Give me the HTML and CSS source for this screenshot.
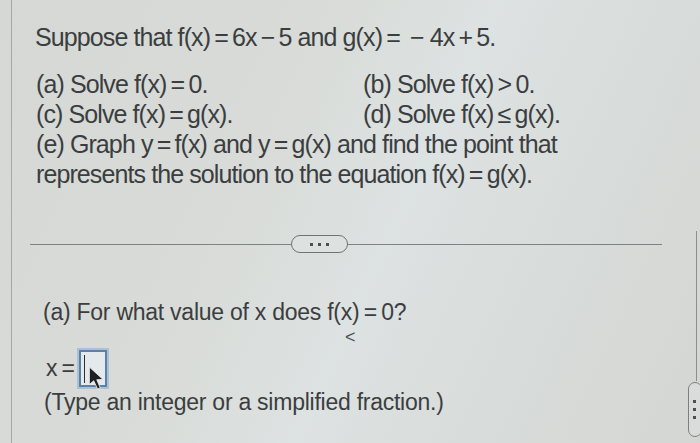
FILE: index.html
```html
<!DOCTYPE html>
<html>
<head>
<meta charset="utf-8">
<link rel="stylesheet" href="styles.css">
</head>
<body>
<div class="screen">
  <div class="frame">
    <div class="problem">
      <p class="title">Suppose that f(x)&#8201;=&#8201;6x&#8201;&minus;&#8201;5 and g(x)&#8201;=&#8201; &minus; 4x&#8201;+&#8201;5.</p>
      <div class="parts">
        <span>(a) Solve f(x)&#8201;=&#8201;0.</span>
        <span>(b) Solve f(x)&#8201;&gt;&#8201;0.</span>
        <span>(c) Solve f(x)&#8201;=&#8201;g(x).</span>
        <span>(d) Solve f(x)&#8201;&le;&#8201;g(x).</span>
        <span class="wide">(e) Graph y&#8201;=&#8201;f(x) and y&#8201;=&#8201;g(x) and find the point that</span>
        <span class="wide">represents the solution to the equation f(x)&#8201;=&#8201;g(x).</span>
      </div>
    </div>
    <div class="divider">
      <span class="rule rule-left"></span>
      <button class="more"><i></i><i></i><i></i></button>
      <span class="rule"></span>
    </div>
    <div class="answer">
      <p class="question">(a) For what value of x does f(x)&#8201;=&#8201;0?</p>
      <span class="scribble">&lt;</span>
      <div class="entry">
        <span class="var">x&#8201;=</span>
        <span class="box">
          <span class="caret"></span>
          <svg class="pointer" width="18" height="24" viewBox="0 0 16 22"><path d="M1 1 L1 17 L5 13.5 L8.5 21 L11 20 L7.8 12.6 L13.5 12.3 Z" fill="#1e2022" stroke="#e8ecee" stroke-width="0.8"/></svg>
        </span>
      </div>
      <p class="hint">(Type an integer or a simplified fraction.)</p>
    </div>
  </div>
  <div class="side-handle"><i></i><i></i><i></i></div>
</div>
</body>
</html>
```
FILE: styles.css
```css
html, body {
  margin: 0;
  padding: 0;
}
body {
  width: 700px;
  height: 443px;
  overflow: hidden;
  font-family: "Liberation Sans", Arial, sans-serif;
  color: #3b3e40;
  background: linear-gradient(115deg, #d5d8d4 0%, #d8dbd7 35%, #dde2e2 55%, #d8dcda 75%, #d4d6d3 100%);
}
.screen {
  position: relative;
  width: 700px;
  height: 443px;
}
.frame {
  margin-left: 11px;
  height: 443px;
  border-left: 1px solid #a3a9a8;
  box-sizing: border-box;
}
.problem {
  padding-top: 22px;
  padding-left: 23px;
  font-size: 25px;
  line-height: 30px;
  letter-spacing: -0.9px;
}
.title {
  margin: 0 0 17px 0;
}
.parts {
  display: grid;
  grid-template-columns: 327px auto;
  padding-left: 1px;
}
.parts .wide {
  grid-column: 1 / 3;
}
.divider {
  display: flex;
  align-items: center;
  margin-top: 46px;
  margin-left: 18px;
  width: 632px;
  height: 18px;
}
.rule {
  flex: 1;
  height: 1px;
  background: #7d8382;
}
.rule-left {
  flex: 0 0 261px;
}
.more {
  width: 57px;
  height: 18px;
  box-sizing: border-box;
  border: 1.5px solid #6f7575;
  border-radius: 9px;
  background: #dde1e0;
  display: flex;
  align-items: center;
  justify-content: center;
  gap: 5px;
  padding: 0;
}
.more i {
  width: 3px;
  height: 3px;
  background: #4a4f50;
}
.answer {
  position: relative;
  padding-left: 31px;
  margin-top: 45px;
  font-size: 23px;
  line-height: 28px;
  letter-spacing: -0.25px;
}
.question {
  margin: 0;
}
.scribble {
  position: absolute;
  left: 333px;
  top: 30px;
  font-size: 18px;
  line-height: 18px;
  color: #4b5052;
}
.entry {
  display: flex;
  align-items: center;
  gap: 4px;
  margin-top: 24px;
  height: 37px;
  padding-left: 3px;
}
.var {
  line-height: 37px;
}
.box {
  position: relative;
  width: 28px;
  height: 37px;
  box-sizing: border-box;
  border: 2px solid #5a80ac;
  background: #e4e9ec;
  box-shadow: 0 0 0 2px rgba(120, 160, 205, 0.45);
}
.caret {
  position: absolute;
  left: 3px;
  top: 3px;
  width: 1.5px;
  height: 28px;
  background: #2b2e30;
}
.pointer {
  position: absolute;
  left: 7px;
  top: 14px;
}
.hint {
  margin: 1px 0 0 1px;
}
.side-handle {
  position: absolute;
  left: 688px;
  top: 382px;
  width: 14px;
  height: 55px;
  box-sizing: border-box;
  border: 1.5px solid #7b8181;
  border-radius: 7px;
  background: #d9dcda;
  display: flex;
  flex-direction: column;
  align-items: center;
  justify-content: center;
  gap: 5px;
  padding-right: 2px;
}
.side-handle::before {
  content: "";
  position: absolute;
  left: 7px;
  top: -152px;
  width: 1px;
  height: 150px;
  background: #8a9090;
}
.side-handle i {
  width: 3px;
  height: 3px;
  background: #4a4f50;
}
```
